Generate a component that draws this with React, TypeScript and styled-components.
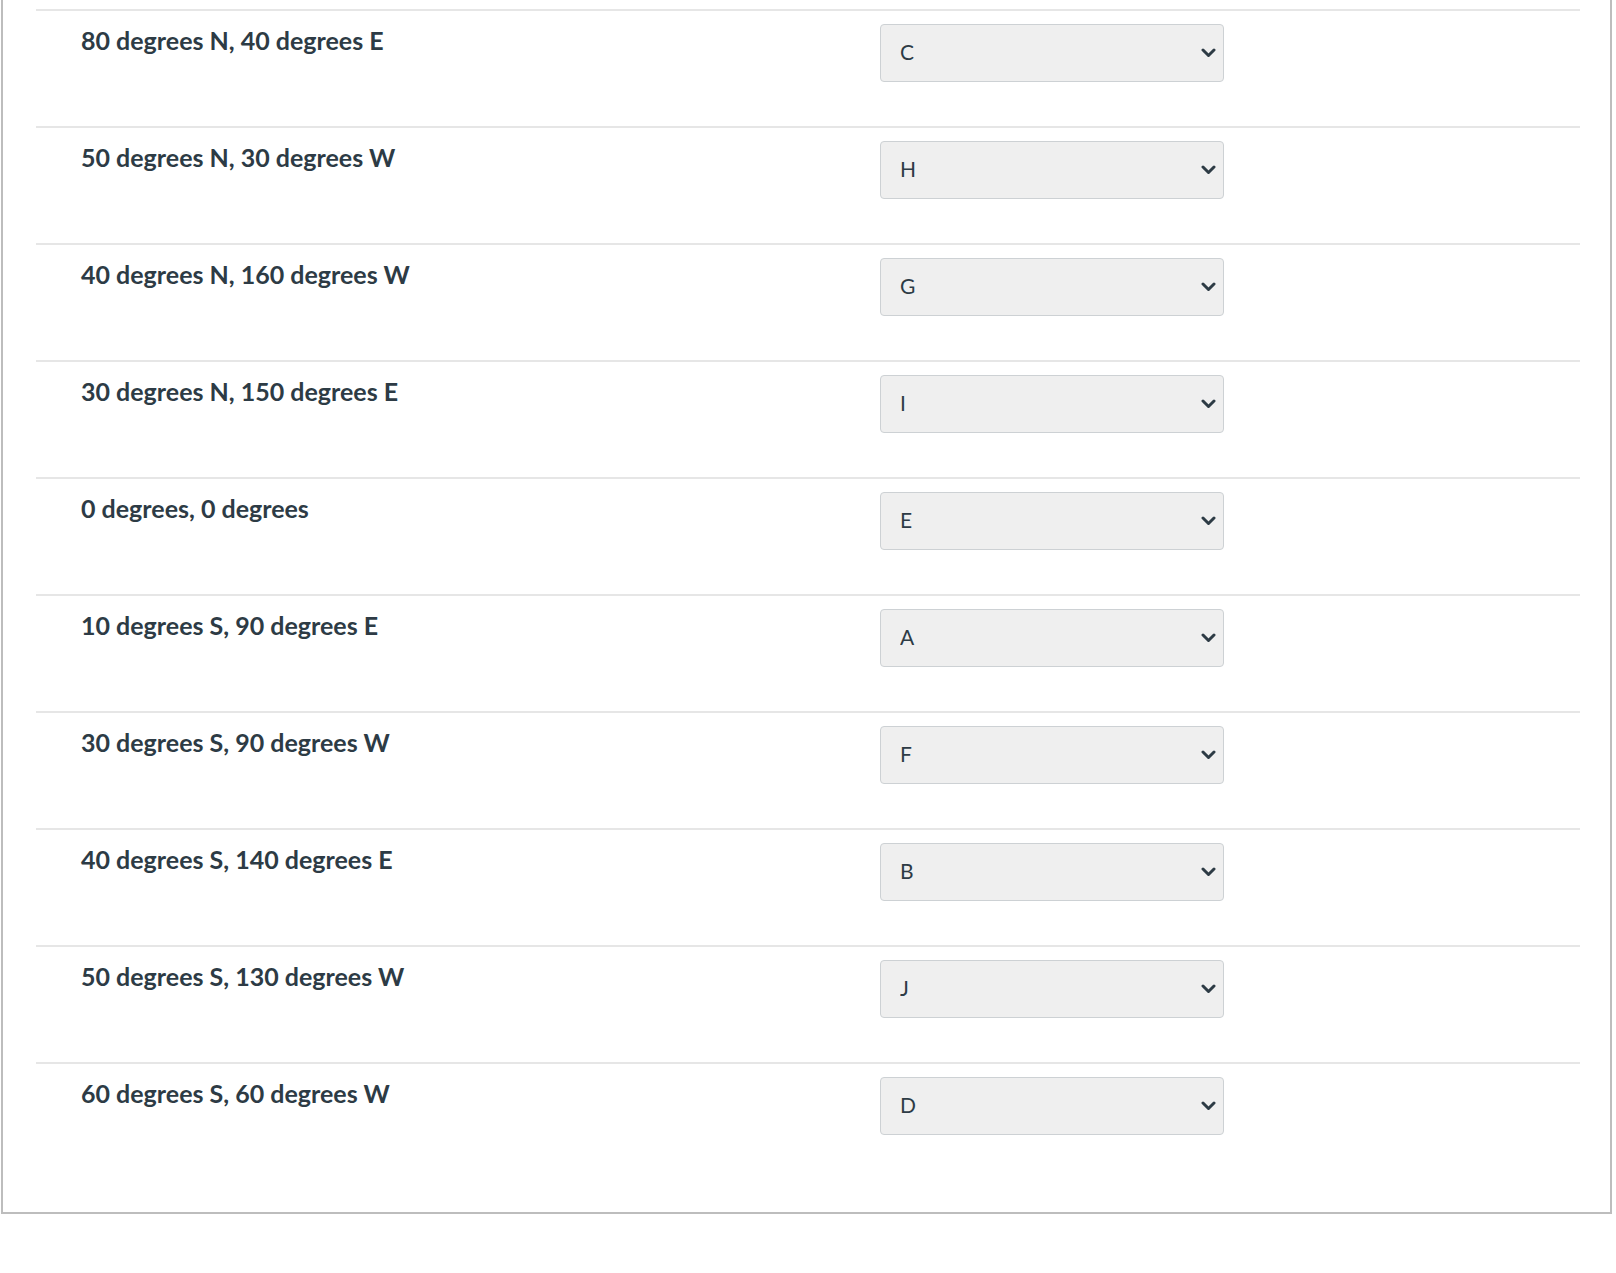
import styled, { createGlobalStyle } from 'styled-components';

interface Pair {
  location: string;
  letter: string;
}

const pairs: Pair[] = [
  { location: '80 degrees N, 40 degrees E', letter: 'C' },
  { location: '50 degrees N, 30 degrees W', letter: 'H' },
  { location: '40 degrees N, 160 degrees W', letter: 'G' },
  { location: '30 degrees N, 150 degrees E', letter: 'I' },
  { location: '0 degrees, 0 degrees', letter: 'E' },
  { location: '10 degrees S, 90 degrees E', letter: 'A' },
  { location: '30 degrees S, 90 degrees W', letter: 'F' },
  { location: '40 degrees S, 140 degrees E', letter: 'B' },
  { location: '50 degrees S, 130 degrees W', letter: 'J' },
  { location: '60 degrees S, 60 degrees W', letter: 'D' },
];

const letters = ['A', 'B', 'C', 'D', 'E', 'F', 'G', 'H', 'I', 'J'];

const GlobalStyle = createGlobalStyle`
  body {
    margin: 0;
    background: #ffffff;
    font-family: Lato, "Open Sans", "Liberation Sans", sans-serif;
    color: #2d3b45;
  }
`;

const Panel = styled.div`
  box-sizing: border-box;
  width: 1611px;
  margin-left: 1px;
  padding: 9px 30px 33px 33px;
  border: 2px solid #bdbdbd;
  border-top: none;
  background: #ffffff;
`;

const Row = styled.div`
  box-sizing: border-box;
  display: flex;
  align-items: flex-start;
  height: 117px;
  padding: 11px 0 0 45px;
  border-top: 2px solid #e6e6e6;
`;

const Label = styled.div`
  flex: 0 0 799px;
  font-size: 25px;
  line-height: 36px;
  font-weight: 700;
  color: #2d3b45;
`;

const SelectWrap = styled.div`
  position: relative;
  width: 344px;
  margin-top: 2px;
`;

const Select = styled.select`
  box-sizing: border-box;
  appearance: none;
  -webkit-appearance: none;
  width: 100%;
  height: 58px;
  padding: 0 40px 4px 19px;
  border: 1.5px solid #cdd1d4;
  border-radius: 4px;
  background: #efefef;
  font-family: Lato, "Open Sans", "Liberation Sans", sans-serif;
  font-size: 21px;
  color: #2d3b45;
  outline: none;
`;

const Chevron = styled.svg`
  position: absolute;
  right: 8px;
  top: 24px;
  width: 15px;
  height: 10px;
  pointer-events: none;
`;

export default function App() {
  return (
    <>
      <GlobalStyle />
      <Panel>
        {pairs.map((p) => (
          <Row key={p.location}>
            <Label>{p.location}</Label>
            <SelectWrap>
              <Select defaultValue={p.letter}>
                {letters.map((l) => (
                  <option key={l} value={l}>
                    {l}
                  </option>
                ))}
              </Select>
              <Chevron viewBox="0 0 15 10">
                <polyline
                  points="2,2 7.5,7.5 13,2"
                  fill="none"
                  stroke="#2d3b45"
                  strokeWidth="3"
                  strokeLinecap="round"
                  strokeLinejoin="round"
                />
              </Chevron>
            </SelectWrap>
          </Row>
        ))}
      </Panel>
    </>
  );
}
